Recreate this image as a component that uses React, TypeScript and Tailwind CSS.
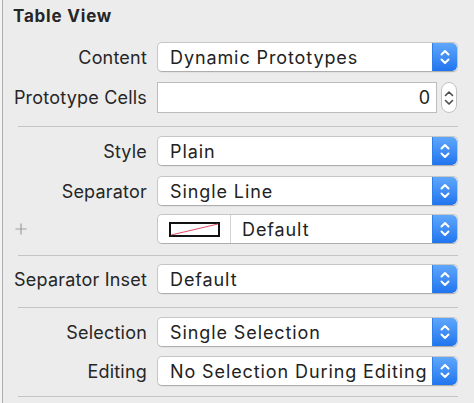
import type { ReactNode } from 'react'

const font = { fontFamily: 'Inter, "Liberation Sans", sans-serif' }

function Chevrons({ color = '#ffffff', w = 2 }: { color?: string; w?: number }) {
  return (
    <svg width="12" height="18" viewBox="0 0 12 18" fill="none">
      <path d="M2.5 6.5 L6 3 L9.5 6.5" stroke={color} strokeWidth={w} strokeLinecap="round" strokeLinejoin="round" />
      <path d="M2.5 11.5 L6 15 L9.5 11.5" stroke={color} strokeWidth={w} strokeLinecap="round" strokeLinejoin="round" />
    </svg>
  )
}

function PopupArrow() {
  return (
    <div className="w-[25px] self-stretch flex items-center justify-center rounded-r-[5px] bg-gradient-to-b from-[#5ea7fb] to-[#1f74ee] border-l border-[#2f7fe9]">
      <Chevrons />
    </div>
  )
}

function Popup({ value }: { value: string }) {
  return (
    <div className="h-[30px] flex items-stretch bg-white rounded-[5px] border border-[#c6c6c6] border-b-[#aeaeae] shadow-[0_1px_0_rgba(0,0,0,0.04)]">
      <div className="flex-1 flex items-center pl-[12px] text-[18px] tracking-[0.9px] text-[#222] whitespace-nowrap overflow-hidden">
        {value}
      </div>
      <PopupArrow />
    </div>
  )
}

function Row({ label, children, className = '' }: { label?: string; children: ReactNode; className?: string }) {
  return (
    <div className={`flex items-center ${className}`}>
      <div className="w-[144px] text-right text-[18px] tracking-[0.2px] text-[#262626] whitespace-nowrap">{label}</div>
      <div className="ml-[10px] w-[301px]">{children}</div>
    </div>
  )
}

function Divider({ className = '' }: { className?: string }) {
  return <div className={`ml-[15px] w-[440px] h-px bg-[#c4c4c4] ${className}`} />
}

export default function App() {
  return (
    <div className="w-[474px] h-[403px] bg-[#f4f4f4] pl-[2px] overflow-hidden" style={font}>
      <div className="h-full bg-[#ececec] border-l border-[#acacac] flex flex-col">
        <div className="pl-[10px] pt-[6px] h-[42px] text-[17px] font-bold tracking-[0.8px] leading-[20px] text-[#262626]">
          Table View
        </div>

        <Row label="Content">
          <Popup value="Dynamic Prototypes" />
        </Row>

        <Row label="Prototype Cells" className="mt-[10px]">
          <div className="flex items-center">
            <div className="w-[280px] h-[31px] bg-white border border-[#bcbcbc] flex items-center justify-end pr-[6px] text-[18px] text-[#222]">
              0
            </div>
            <div className="ml-[4px] w-[16px] h-[31px] rounded-full bg-white border border-[#c2c2c2] flex items-center justify-center">
              <Chevrons color="#4a4a4a" w={1.6} />
            </div>
          </div>
        </Row>

        <Divider className="mt-[13px]" />

        <Row label="Style" className="mt-[9px]">
          <Popup value="Plain" />
        </Row>

        <Row label="Separator" className="mt-[10px]">
          <Popup value="Single Line" />
        </Row>

        <div className="flex items-center mt-[8px]">
          <div className="w-[144px] pl-[12px] flex items-center">
            <svg width="12" height="12" viewBox="0 0 12 12">
              <path d="M6 0.5 V11.5 M0.5 6 H11.5" stroke="#9d9d9d" strokeWidth="1.2" />
            </svg>
          </div>
          <div className="ml-[10px] w-[301px] h-[30px] flex items-stretch bg-white rounded-[5px] border border-[#c6c6c6] border-b-[#aeaeae]">
            <div className="w-[73px] border-r border-[#d2d2d2] flex items-center justify-center">
              <svg width="51" height="15" viewBox="0 0 51 15">
                <rect x="1" y="1" width="49" height="13" fill="white" stroke="#111" strokeWidth="2" />
                <path d="M2 13 L49 2" stroke="#e2546a" strokeWidth="1.2" />
              </svg>
            </div>
            <div className="flex-1 flex items-center pl-[11px] text-[18px] tracking-[0.9px] text-[#222]">Default</div>
            <PopupArrow />
          </div>
        </div>

        <Divider className="mt-[11px]" />

        <Row label="Separator Inset" className="mt-[8px]">
          <Popup value="Default" />
        </Row>

        <Divider className="mt-[13px]" />

        <Row label="Selection" className="mt-[9px]">
          <Popup value="Single Selection" />
        </Row>

        <Row label="Editing" className="mt-[9px]">
          <Popup value="No Selection During Editing" />
        </Row>

        <Divider className="mt-[10px]" />
      </div>
    </div>
  )
}
